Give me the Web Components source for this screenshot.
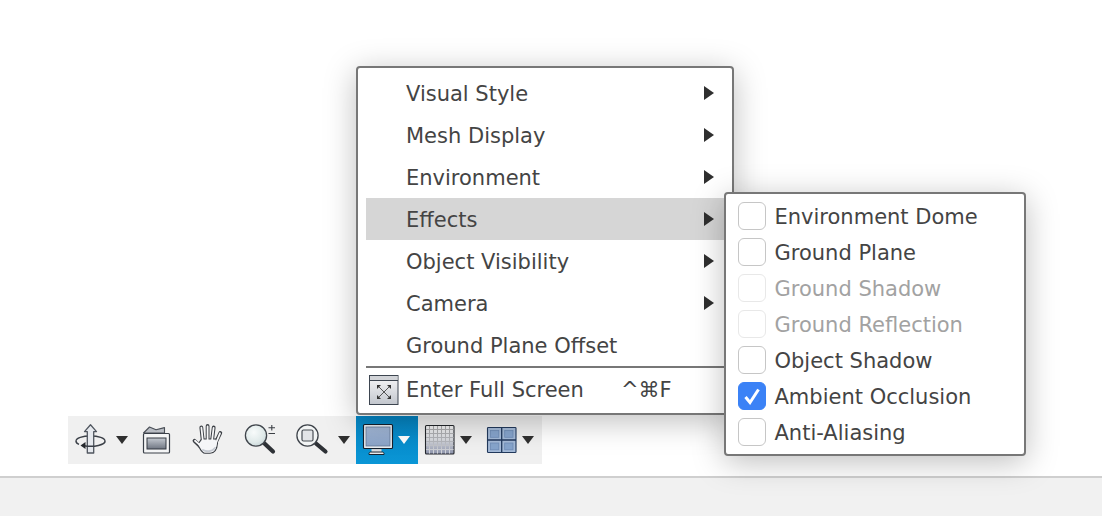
<!DOCTYPE html>
<html lang="en"><head><meta charset="utf-8"><title>Viewer</title>
<style>
html,body{margin:0;padding:0;background:#fff}
body{font-family:"DejaVu Sans",sans-serif;width:1102px;height:516px;overflow:hidden}
</style></head>
<body>
<x-app>
  <x-toolbar>
    <x-tool style="--pl:7px;--gap:9px;--pr:6px" caret>
      <svg viewBox="0 0 32 32" width="32" height="32" fill="none">
        <path d="M1 17A14.5 5 0 0 1 30 17" stroke="#3a3f47" stroke-width="1.3"/>
        <path d="M15.5 .8L21.5 7.6H18.7V29H12.300V7.6H9.5Z" fill="#e6e9ee" stroke="#50565f" stroke-width="1.3" stroke-linejoin="round"/>
        <path d="M30 17A14.5 5 0 0 1 9 21.7" stroke="#3a3f47" stroke-width="1.5"/>
        <path d="M1 17C1 18.400 2.200 19.700 4 20.400" stroke="#3a3f47" stroke-width="1.5"/>
        <path d="M5.500 21.500L10.500 18V25Z" fill="#26292e"/>
      </svg>
    </x-tool>
    <x-tool style="--pl:6px;--pr:6px">
      <svg viewBox="0 0 32 32" width="32" height="32">
        <defs><linearGradient id="g1" x1="0" y1="0" x2="0" y2="1"><stop offset="0" stop-color="#c4c9d1"/><stop offset="1" stop-color="#6f7682"/></linearGradient></defs>
        <path d="M3.500 9L9.500 3L16 5.800L24.500 3.600V9Z" fill="#b9bdc4" stroke="#4a4f57" stroke-width="1.100" stroke-linejoin="round"/>
        <rect x="3.500" y="9.500" width="26" height="19.500" rx="1" fill="#f4f5f6" stroke="#3a4049" stroke-width="1.200"/>
        <rect x="7" y="14" width="19" height="11" fill="url(#g1)" stroke="#343a43" stroke-width="1"/>
      </svg>
    </x-tool>
    <x-tool style="--pl:14px;--pr:6px">
      <svg viewBox="0 0 32 32" width="32" height="32" fill="none" stroke-linecap="round">
        <g stroke="#3b3f45" stroke-width="3.800">
          <path d="M8 22L2.500 16.800M10.800 17L9.300 3.500M15.600 16V2M20 16.500L21.700 3.500M24 18L28.300 9"/>
        </g>
        <path d="M4.500 19C7 21 8 16 10 15H24L25.500 19C25 25 23 29.200 18 29.200H13C9 29.200 8 23.500 4.500 19Z" fill="#f4f5f7" stroke="#3b3f45" stroke-width="1.200"/>
        <g stroke="#f7f7f8" stroke-width="1.800">
          <path d="M8.500 21.500L3 16.800M10.900 17.500L9.400 3.700M15.600 17V2.300M20 17L21.600 3.800M24 19L28 9.300"/>
        </g>
        <path d="M8 20C10 17 11 17 12 17H24L24.800 19C24.300 24.500 22.500 28.500 18 28.500H13C10 28.500 9.500 23 8 20Z" fill="#f5f6f8"/>
        <path d="M11 26C14 28 20 28 23 24" stroke="#c5cad2" stroke-width="2"/>
      </svg>
    </x-tool>
    <x-tool style="--pl:14px;--pr:6px">
      <svg viewBox="0 0 32 32" width="32" height="32" fill="none">
        <defs><radialGradient id="g2" cx=".4" cy=".35" r=".8"><stop offset="0" stop-color="#f8fbfb"/><stop offset=".6" stop-color="#dfe9e9"/><stop offset="1" stop-color="#bcccd0"/></radialGradient></defs>
        <path d="M20.500 19.500L29 27.500" stroke="#2e3136" stroke-width="4.200" stroke-linecap="round"/>
        <circle cx="12" cy="11.500" r="10.600" fill="url(#g2)" stroke="#3f444b" stroke-width="1.300"/>
        <path d="M24.500 3.800H31M27.800 1V6.500M24.500 9.500H31" stroke="#3b3f45" stroke-width="1.100"/>
      </svg>
    </x-tool>
    <x-tool style="--pl:14px;--gap:10px;--pr:6px" caret>
      <svg viewBox="0 0 32 32" width="32" height="32" fill="none">
        <path d="M20 19.500L29.500 27.500" stroke="#2e3136" stroke-width="4.200" stroke-linecap="round"/>
        <circle cx="11.500" cy="11.500" r="10.600" fill="#f3f5f5" stroke="#3f444b" stroke-width="1.300"/>
        <rect x="6" y="6" width="11" height="11" rx="1.500" fill="#e2e4e7" stroke="#494e55" stroke-width="1.200"/>
      </svg>
    </x-tool>
    <x-tool active style="--pl:6px;--gap:4px;--pr:8px" caret>
      <svg viewBox="0 0 32 32" width="32" height="32">
        <defs><linearGradient id="g3" x1="0" y1="0" x2="0" y2="1"><stop offset="0" stop-color="#a2b7d6"/><stop offset="1" stop-color="#8ba3c7"/></linearGradient>
        <linearGradient id="g4" x1="0" y1="0" x2="0" y2="1"><stop offset="0" stop-color="#b9bdc2"/><stop offset="1" stop-color="#eef0f2"/></linearGradient></defs>
        <rect x="9.500" y="24" width="10" height="4" fill="url(#g4)"/>
        <path d="M7 30.500V29.500C7 28.500 8 28 9 28H20C21 28 22 28.500 22 29.500V30.500Z" fill="#e8eaec" stroke="#18222e" stroke-width="1"/>
        <rect x="1.500" y=".5" width="29" height="24" rx="1" fill="#e9edf2" stroke="#16202c" stroke-width="1.100"/>
        <rect x="4" y="3" width="24" height="19" fill="url(#g3)" stroke="#5c6f8c" stroke-width=".7"/>
      </svg>
    </x-tool>
    <x-tool style="--pl:6px;--gap:4px;--pr:8px" caret>
      <svg viewBox="0 0 32 32" width="32" height="32">
        <defs>
          <linearGradient id="g5" x1="0" y1="0" x2="0" y2="1"><stop offset="0" stop-color="#f4f4f4"/><stop offset=".5" stop-color="#d6d8dd"/><stop offset="1" stop-color="#8b92aa"/></linearGradient>
          <linearGradient id="g6" gradientUnits="userSpaceOnUse" x1="0" y1="2" x2="0" y2="30"><stop offset="0" stop-color="#a8a8a8"/><stop offset=".55" stop-color="#b4b6bc"/><stop offset="1" stop-color="#d8dae0"/></linearGradient>
        </defs>
        <rect x="1.500" y="1.500" width="28.500" height="28.500" rx="1" fill="url(#g5)" stroke="#24272c" stroke-width="1.100"/>
        <path d="M5.500 2V29.500H5.600M9.500 2V29.500H9.600M13.500 2V29.500H13.600M17.500 2V29.500H17.600M21.500 2V29.500H21.600M25.500 2V29.500H25.600M2 5.500H29.500V5.600M2 9.500H29.500V9.600M2 13.500H29.500V13.600M2 17.500H29.500V17.600M2 21.500H29.500V21.600M2 25.500H29.500V25.600" stroke="url(#g6)" stroke-width="1" fill="none"/>
      </svg>
    </x-tool>
    <x-tool style="--pl:6px;--gap:4px;--pr:8px" caret>
      <svg viewBox="0 0 32 32" width="32" height="32">
        <rect x="1.500" y="3.500" width="28.500" height="25" rx=".8" fill="#a4bad8" stroke="#22395c" stroke-width="1.100"/>
        <path d="M15.700 3.500V28.500M1.500 16H30" stroke="#22395c" stroke-width="1.300"/>
        <g fill="#86a4cc" stroke="#6f8db6" stroke-width=".8"><rect x="4.500" y="6.500" width="8.300" height="6.800"/><rect x="18.700" y="6.500" width="8.300" height="6.800"/><rect x="4.500" y="19" width="8.300" height="6.800"/><rect x="18.700" y="19" width="8.300" height="6.800"/></g>
      </svg>
    </x-tool>
  </x-toolbar>
  <x-popup style="--x:356px;--y:66px;--w:378px;--z:1;--pt:4px;--pb:1px">
    <x-menu-item arrow>Visual Style</x-menu-item>
    <x-menu-item arrow>Mesh Display</x-menu-item>
    <x-menu-item arrow>Environment</x-menu-item>
    <x-menu-item arrow highlighted>Effects</x-menu-item>
    <x-menu-item arrow>Object Visibility</x-menu-item>
    <x-menu-item arrow>Camera</x-menu-item>
    <x-menu-item>Ground Plane Offset</x-menu-item>
    <x-fullscreen-item shortcut="^⌘F">Enter Full Screen</x-fullscreen-item>
  </x-popup>
  <x-popup style="--x:724px;--y:192px;--w:302px;--z:2;--pt:4px;--pb:4px">
    <x-check-item>Environment Dome</x-check-item>
    <x-check-item>Ground Plane</x-check-item>
    <x-check-item disabled>Ground Shadow</x-check-item>
    <x-check-item disabled>Ground Reflection</x-check-item>
    <x-check-item>Object Shadow</x-check-item>
    <x-check-item checked>Ambient Occlusion</x-check-item>
    <x-check-item>Anti-Aliasing</x-check-item>
  </x-popup>
</x-app>
<script>
const TEXT = 'font:21px/1 "DejaVu Sans",sans-serif;color:#444;';
function def(name, html, setup){
  customElements.define(name, class extends HTMLElement{
    constructor(){super();this.attachShadow({mode:'open'}).innerHTML=html;}
    connectedCallback(){ if(setup) setup(this, this.shadowRoot); }
  });
}
def('x-app', `<style>
  :host{display:flex;flex-direction:column;width:1102px;height:516px;position:relative}
  main{flex:1;display:flex;align-items:flex-end;padding:0 0 12px 68px}
  footer{height:38px;background:#f1f1f1;border-top:2px solid #cfcfcf}
  </style><main><slot></slot></main><footer></footer>`);
def('x-toolbar', `<style>:host{display:flex;height:48px;background:#f0f0f0}</style><slot></slot>`);
def('x-tool', `<style>
  :host{display:flex;align-items:center;gap:var(--gap,0);padding:0 var(--pr,0) 0 var(--pl,0);height:48px;box-sizing:border-box}
  :host([active]){background:linear-gradient(#0584c2,#0a96d6)}
  i{display:none;width:0;height:0;border:6px solid transparent;border-top:8px solid #2f2f2f;border-bottom:0}
  :host([caret]) i{display:block}
  :host([active]) i{border-top-color:#fff}
  ::slotted(svg){display:block;overflow:visible}
  </style><slot></slot><i></i>`);
def('x-popup', `<style>
  :host{position:absolute;left:var(--x);top:var(--y);width:var(--w);z-index:var(--z);box-sizing:border-box;
  background:#fff;border:2px solid #777;border-radius:4px;padding:var(--pt) 8px var(--pb);
  box-shadow:0 6px 32px rgba(0,0,0,.26)}
  </style><slot></slot>`);
def('x-menu-item', `<style>
  :host{display:flex;align-items:center;height:42px;padding-left:40px;${TEXT}}
  :host([highlighted]){background:#d6d6d6}
  span{flex:1;white-space:nowrap;padding-top:2px}
  i{display:none;width:0;height:0;margin-right:10px;border-left:10px solid #2f2f2f;border-top:7.5px solid transparent;border-bottom:7.5px solid transparent}
  :host([arrow]) i{display:block}
  </style><span><slot></slot></span><i></i>`);
def('x-fullscreen-item', `<style>
  :host{display:flex;align-items:center;height:44px;padding-left:3px;border-top:2px solid #777;${TEXT}}
  svg{display:block;margin-right:7px;flex:none}
  span{width:215px;white-space:nowrap}
  b{font-weight:400;white-space:nowrap}
  </style>
  <svg viewBox="0 0 30 30" width="30" height="30">
    <defs><linearGradient id="f" x1="0" y1="0" x2="0" y2="1"><stop offset="0" stop-color="#f8f8f9"/><stop offset="1" stop-color="#c2c6cd"/></linearGradient></defs>
    <rect x=".5" y=".5" width="28.500" height="29" fill="url(#f)" stroke="#3d4550"/>
    <rect x="1" y="1" width="27.500" height="4" fill="#d2d4d8"/>
    <path d="M.5 5.500H29" stroke="#3d4550"/>
    <path d="M9 11L21 23M21 11L9 23" stroke="#444" stroke-width=".9"/>
    <path d="M8 10H12L8 14ZM22 10H18L22 14ZM8 24H12L8 20ZM22 24H18L22 20Z" fill="#333"/>
  </svg><span><slot></slot></span><b></b>`, (el, root)=>{root.querySelector('b').textContent = el.getAttribute('shortcut');});
def('x-check-item', `<style>
  :host{display:flex;align-items:center;height:36px;padding-left:4px;gap:8.5px;${TEXT}}
  :host([disabled]){color:#a2a2a2}
  .box{width:28px;height:28px;box-sizing:border-box;border:1.5px solid #c6c6c6;border-radius:6px;background:#fff;flex:none;display:flex;align-items:center;justify-content:center}
  :host([disabled]) .box{border-color:#e8e8e8}
  :host([checked]) .box{background:#3b82f6;border-color:#3b82f6}
  svg{display:none}
  :host([checked]) svg{display:block}
  span{white-space:nowrap;padding-top:2px}
  </style><div class="box"><svg viewBox="0 0 18 18" width="18" height="18" fill="none"><path d="M2.500 10L7 15.500L15.500 2.500" stroke="#fff" stroke-width="3"/></svg></div><span><slot></slot></span>`);
</script>
</body></html>
